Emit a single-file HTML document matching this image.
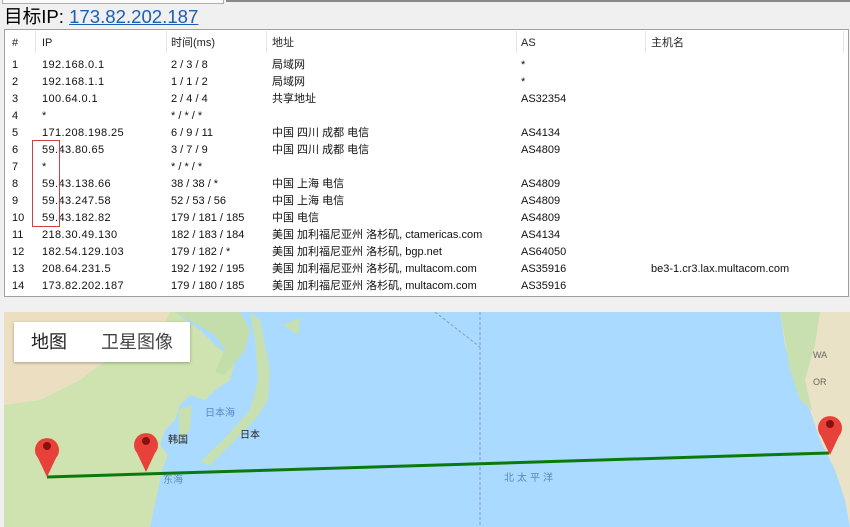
<!DOCTYPE html>
<html><head><meta charset="utf-8"><style>
*{margin:0;padding:0;box-sizing:border-box}
body{width:850px;height:527px;background:#f0f0f0;position:relative;overflow:hidden;font-family:"Liberation Sans","Noto Sans CJK SC",sans-serif;}
.t{position:absolute;font-size:11px;color:#111;white-space:nowrap;line-height:13px}
.h{color:#222}
#title{position:absolute;left:4px;top:6px;font-size:18.6px;line-height:22px;color:#000}
#title a{color:#1a5fb4;text-decoration:underline}
#tbl{position:absolute;left:4px;top:29px;width:845px;height:268px;background:#fff;border:1px solid #a0a0a0}
.sep{position:absolute;top:1px;width:1px;height:22px;background:#e5e5e5}
#map{position:absolute;left:4px;top:312px;width:846px;height:215px;background:#aadaff;overflow:hidden}
</style></head><body>
<div style="position:absolute;left:2px;top:0;width:222px;height:4px;background:#fafafa;border:1px solid #adadad;border-top:none"></div>
<div style="position:absolute;left:226px;top:0;width:624px;height:2px;background:#888"></div>
<div id="title">目标IP: <a>173.82.202.187</a></div>
<div id="tbl">
<div class="sep" style="left:30px"></div><div class="sep" style="left:161px"></div><div class="sep" style="left:261px"></div><div class="sep" style="left:511px"></div><div class="sep" style="left:640px"></div><div class="sep" style="left:838px"></div>
</div>
<div id="rows"></div>
<div style="position:absolute;left:32px;top:140px;width:28px;height:87px;border:1px solid #d04040"></div>
<div id="map">
<svg width="846" height="215" viewBox="4 312 846 215" style="position:absolute;left:0;top:0">
<path d="M4 312 L175 312 L200 330 L215 345 L235 360 L230 380 L215 390 L205 400 L190 395 L180 405 L175 420 L165 430 L160 445 L168 455 L162 470 L158 490 L150 527 L4 527 Z" fill="#cfe3b0"/>
<path d="M4 312 L170 312 L160 335 L120 350 L80 380 L40 400 L4 405 Z" fill="#ecdfc1"/>
<path d="M175 312 L240 312 L250 330 L245 350 L225 375 L215 372 L225 350 L215 335 Z" fill="#c3ddab"/>
<path d="M178 410 L192 405 L190 430 L180 440 Z" fill="#c8e0b0"/>
<path d="M250 312 L260 320 L265 345 L270 370 L268 400 L255 420 L235 440 L210 465 L200 462 L225 438 L250 410 L258 380 L255 340 Z" fill="#c8e0b0"/>
<path d="M283 325 L300 318 L298 335 Z" fill="#c8e0b0"/>
<path d="M780 312 L850 312 L850 527 L845 500 L835 470 L820 440 L810 410 L795 380 L785 345 Z" fill="#e9e2c6"/>
<path d="M780 312 L820 312 L815 345 L805 380 L812 410 L800 400 L790 370 L785 340 Z" fill="#c8e0b0"/>
<path d="M480 312 L480 527" stroke="#8899bb" stroke-width="1" stroke-dasharray="3,2"/>
<path d="M435 312 L480 347" stroke="#8899bb" stroke-width="1" stroke-dasharray="3,2"/>
<line x1="47" y1="477" x2="829" y2="453" stroke="#0a7a0a" stroke-width="3"/>
<g fill="#e8413a"><path d="M47 477 L38 458 A12 12 0 1 1 56 458 Z"/><path d="M146 472 L137 453 A12 12 0 1 1 155 453 Z"/><path d="M830 455 L821 436 A12 12 0 1 1 839 436 Z"/></g>
<g fill="#8a1010"><circle cx="47" cy="446" r="4"/><circle cx="146" cy="441" r="4"/><circle cx="830" cy="424" r="4"/></g>
<g font-family="Liberation Sans,Noto Sans CJK SC,sans-serif" font-size="10">
<text x="205" y="416" fill="#5c87c2">日本海</text>
<text x="240" y="438" fill="#222">日本</text>
<text x="168" y="443" fill="#222">韩国</text>
<text x="163" y="483" fill="#5c87c2">东海</text>
<text x="504" y="481" fill="#5c87c2" letter-spacing="3">北太平洋</text>
<text x="813" y="358" fill="#666" font-size="9">WA</text>
<text x="813" y="385" fill="#666" font-size="9">OR</text>
</g>
</svg>
<div style="position:absolute;left:10px;top:10px;width:176px;height:40px;background:#fff;box-shadow:0 1px 3px rgba(0,0,0,.3);font-size:18px;line-height:40px;color:#222"><span style="position:absolute;left:17px">地图</span><span style="position:absolute;left:87px;color:#444">卫星图像</span></div>
</div>
<script>
var rows=[["1","192.168.0.1","2 / 3 / 8","局域网","*",""],["2","192.168.1.1","1 / 1 / 2","局域网","*",""],["3","100.64.0.1","2 / 4 / 4","共享地址","AS32354",""],["4","*","* / * / *","","",""],["5","171.208.198.25","6 / 9 / 11","中国 四川 成都 电信","AS4134",""],["6","59.43.80.65","3 / 7 / 9","中国 四川 成都 电信","AS4809",""],["7","*","* / * / *","","",""],["8","59.43.138.66","38 / 38 / *","中国 上海 电信","AS4809",""],["9","59.43.247.58","52 / 53 / 56","中国 上海 电信","AS4809",""],["10","59.43.182.82","179 / 181 / 185","中国 电信","AS4809",""],["11","218.30.49.130","182 / 183 / 184","美国 加利福尼亚州 洛杉矶, ctamericas.com","AS4134",""],["12","182.54.129.103","179 / 182 / *","美国 加利福尼亚州 洛杉矶, bgp.net","AS64050",""],["13","208.64.231.5","192 / 192 / 195","美国 加利福尼亚州 洛杉矶, multacom.com","AS35916","be3-1.cr3.lax.multacom.com"],["14","173.82.202.187","179 / 180 / 185","美国 加利福尼亚州 洛杉矶, multacom.com","AS35916",""]];
var xs=[12,42,171,272,521,651],h="";
["#","IP","时间(ms)","地址","AS","主机名"].forEach(function(c,i){h+='<div class="t h" style="left:'+xs[i]+'px;top:37px">'+c+'</div>'});
rows.forEach(function(r,j){r.forEach(function(c,i){if(c)h+='<div class="t" style="left:'+xs[i]+'px;top:'+(59+j*17)+'px'+(i==1?';letter-spacing:.4px':'')+'">'+c+'</div>'})});
document.getElementById("rows").innerHTML=h;
</script>
</body></html>
